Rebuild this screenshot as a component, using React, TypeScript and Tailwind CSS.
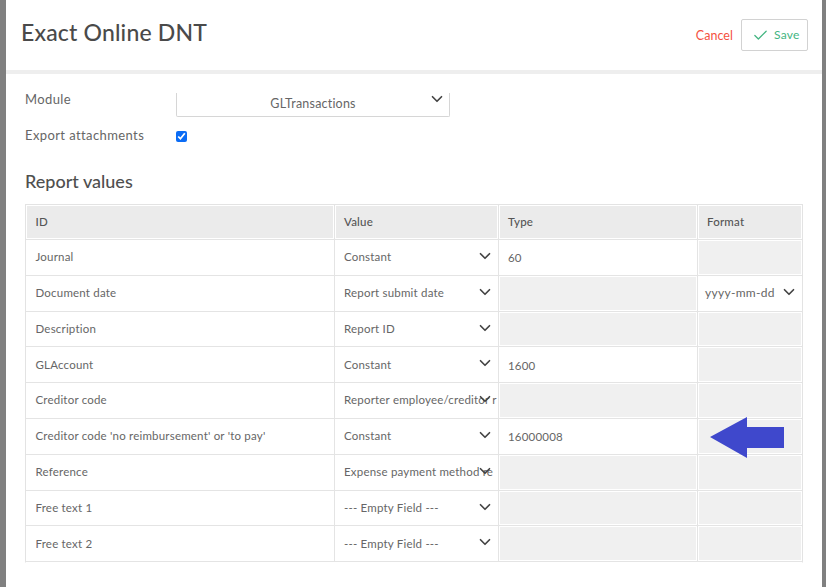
import { Check, ChevronDown } from "lucide-react";

interface Row {
  id: string;
  value: string;
  type?: string;
  format?: string;
}

const rows: Row[] = [
  { id: "Journal", value: "Constant", type: "60" },
  { id: "Document date", value: "Report submit date", format: "yyyy-mm-dd" },
  { id: "Description", value: "Report ID" },
  { id: "GLAccount", value: "Constant", type: "1600" },
  { id: "Creditor code", value: "Reporter employee/creditor r" },
  { id: "Creditor code 'no reimbursement' or 'to pay'", value: "Constant", type: "16000008" },
  { id: "Reference", value: "Expense payment method re" },
  { id: "Free text 1", value: "--- Empty Field ---" },
  { id: "Free text 2", value: "--- Empty Field ---" },
];

const Chevron = ({ className }: { className: string }) => (
  <ChevronDown strokeWidth={2.25} className={`absolute h-[18px] w-[18px] text-[#444] ${className}`} />
);

const TableRow = ({ row }: { row: Row }) => (
  <div className="grid h-[35.8px] grid-cols-[309px_164px_199px_1fr] border-b border-[#e4e4e4] text-[11.5px] tracking-[0.2px] last:h-[36px]">
    <div className="flex items-center border-r border-[#e4e4e4] pb-[1px] pl-[9.5px]">{row.id}</div>
    <div className="relative flex items-center overflow-hidden border-r border-[#e4e4e4] pb-[1px] pl-[9px] whitespace-nowrap">
      {row.value}
      <Chevron className="right-[4px] top-[7px]" />
    </div>
    <div className="flex border-r border-[#e4e4e4]">
      {row.type ? (
        <div className="flex flex-1 items-center bg-white pt-[1px] pl-[9px]">{row.type}</div>
      ) : (
        <div className="m-px flex-1 bg-[#f0f0f0]" />
      )}
    </div>
    {row.format ? (
      <div className="relative flex items-center bg-white pl-[7px] text-[12px] tracking-[0.3px]">
        {row.format}
        <Chevron className="right-[4px] top-[7px]" />
      </div>
    ) : (
      <div className="m-px bg-[#f0f0f0]" />
    )}
  </div>
);

export default function App() {
  return (
    <div className="relative flex h-[587px] w-[826px] overflow-hidden bg-[#808080] font-['Lato',sans-serif] text-[#666]">
      <div className="ml-[6px] mr-[4px] flex w-[816px] flex-col bg-white">
        <header className="flex h-[70px] shrink-0 items-center justify-between pl-[15px] pr-[14px]">
          <h1 className="pb-[5px] text-[23px] font-medium tracking-[0.17px] text-[#4a4a4a]">Exact Online DNT</h1>
          <div className="flex items-center gap-[8px]">
            <button className="pt-[2px] text-[12.5px] tracking-[0.05px] text-[#f4523f]">Cancel</button>
            <button className="flex h-[32px] w-[67px] items-center gap-[5px] rounded-[2px] border border-[#d2d2d2] pl-[10px] text-[12px] tracking-[0.2px] text-[#43b581]">
              <Check className="h-[17px] w-[17px]" strokeWidth={1.75} />
              Save
            </button>
          </div>
        </header>
        <div className="h-[4px] shrink-0 bg-[#eeeeee]" />

        <div className="pl-[19px] pr-[19px]">
          <div className="flex h-[43px] items-start">
            <span className="mt-[16px] w-[151px] text-[13px] tracking-[0.4px]">Module</span>
            <div className="relative mt-[19px] flex h-[24px] w-[274px] items-center justify-center rounded-b-[2px] border-x border-b border-[#d6d6d6] text-[12.5px] tracking-[0.2px]">
              GLTransactions
              <Chevron className="right-[3px] top-[-3px]" />
            </div>
          </div>
          <div className="mt-[10px] flex h-[18px] items-center">
            <span className="w-[151px] text-[13px] tracking-[0.4px]">Export attachments</span>
            <input type="checkbox" defaultChecked className="m-0 h-[11px] w-[11px] accent-[#0b6cf5]" />
          </div>
          <h2 className="mt-[24px] text-[18px] leading-[24px] font-medium text-[#4f4f4f]">Report values</h2>

          <div className="mt-[11px] w-[778px] border-x border-t border-b border-[#e3e3e3] border-b-transparent">
            <div className="grid h-[35px] grid-cols-[309px_164px_199px_1fr] border-b border-[#e4e4e4] text-[11.5px] font-medium tracking-[0.2px] text-[#555]">
              <div className="flex border-r border-[#e4e4e4]">
                <div className="m-px flex flex-1 items-center bg-[#ebebeb] pl-[8.5px]">ID</div>
              </div>
              <div className="flex border-r border-[#e4e4e4]">
                <div className="m-px flex flex-1 items-center bg-[#ebebeb] pl-[8px]">Value</div>
              </div>
              <div className="flex border-r border-[#e4e4e4]">
                <div className="m-px flex flex-1 items-center bg-[#ebebeb] pl-[8px]">Type</div>
              </div>
              <div className="m-px flex items-center bg-[#ebebeb] pl-[8px]">Format</div>
            </div>
            {rows.map((row) => (
              <TableRow key={row.id} row={row} />
            ))}
          </div>
        </div>
      </div>

      {/* annotation arrow drawn over the table */}
      <svg className="absolute left-[708px] top-[415px]" width="78" height="45" viewBox="0 0 78 45">
        <polygon points="2,22 39,2 39,12 76,12 76,33 39,33 39,43" fill="#3f48cc" />
      </svg>
    </div>
  );
}
